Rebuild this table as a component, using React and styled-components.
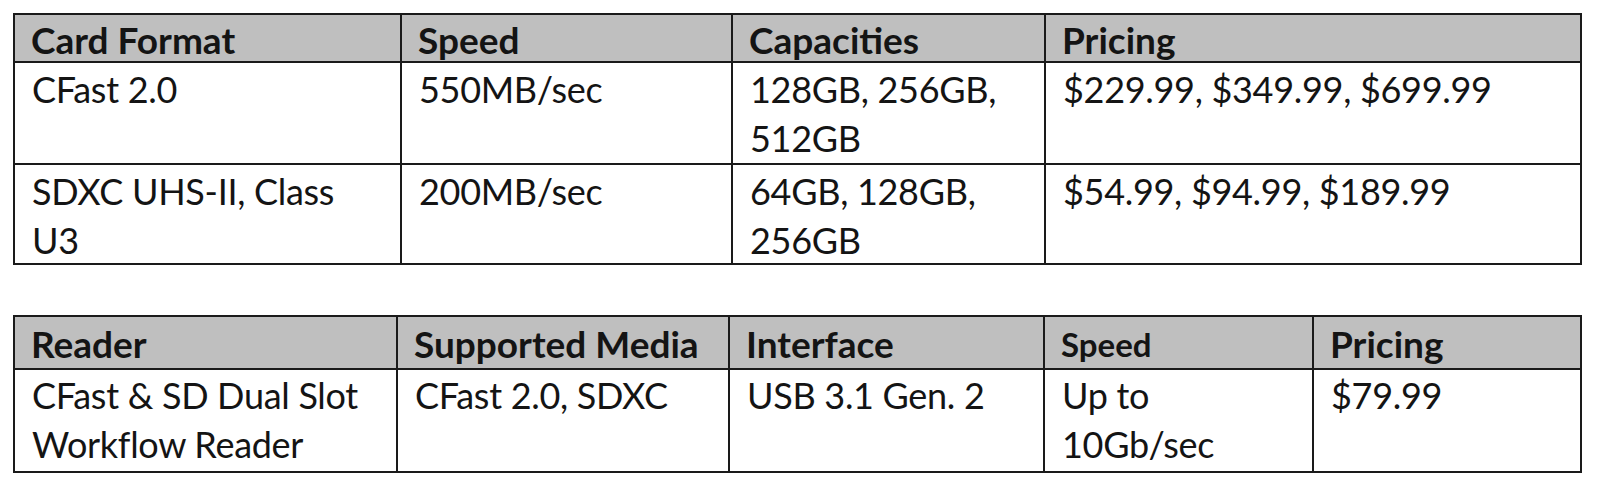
import React from 'react';
import styled, { createGlobalStyle } from 'styled-components';

const GlobalStyle = createGlobalStyle`
  html, body {
    margin: 0;
    padding: 0;
    background: #ffffff;
  }
  body {
    font-family: 'Lato', 'Open Sans', sans-serif;
    color: #141414;
  }
`;

const Page = styled.div`
  display: flex;
  flex-direction: column;
  gap: 50px;
  padding: 13px 0 0 13px;
  width: 1569px;
`;

const Table = styled.div`
  display: grid;
  grid-template-columns: ${p => p.cols};
  grid-template-rows: ${p => p.rows};
  gap: 2px;
  padding: 2px;
  background: #1a1a1a;
`;

const HeadCell = styled.div`
  background: #bfbfbf;
  font-weight: 700;
  font-size: ${p => (p.small ? '33px' : '37px')};
  line-height: 46px;
  padding: ${p => p.pad} 10px 0 16px;
  white-space: nowrap;
  overflow: hidden;
`;

const BodyCell = styled.div`
  background: #ffffff;
  font-size: 36px;
  letter-spacing: -0.3px;
  line-height: 49px;
  padding: ${p => p.pad} 10px 0 17px;
  white-space: nowrap;
  overflow: hidden;
`;

const cards = {
  cols: '385px 329px 311px 534px',
  rows: '46px 100px 98px',
  headPad: '2px',
  bodyPad: '2px',
  head: ['Card Format', 'Speed', 'Capacities', 'Pricing'],
  body: [
    [['CFast 2.0'], ['550MB/sec'], ['128GB, 256GB,', '512GB'], ['$229.99, $349.99, $699.99']],
    [['SDXC UHS-II, Class', 'U3'], ['200MB/sec'], ['64GB, 128GB,', '256GB'], ['$54.99, $94.99, $189.99']],
  ],
};

const readers = {
  cols: '381px 330px 313px 267px 266px',
  rows: '51px 101px',
  headPad: '4px',
  bodyPad: '1px',
  smallHead: 3,
  head: ['Reader', 'Supported Media', 'Interface', 'Speed', 'Pricing'],
  body: [
    [['CFast & SD Dual Slot', 'Workflow Reader'], ['CFast 2.0, SDXC'], ['USB 3.1 Gen. 2'], ['Up to', '10Gb/sec'], ['$79.99']],
  ],
};

function Lines({ lines }) {
  return lines.map((l, i) => (
    <React.Fragment key={i}>
      {i > 0 && <br />}
      {l}
    </React.Fragment>
  ));
}

function DataTable({ data }) {
  return (
    <Table cols={data.cols} rows={data.rows}>
      {data.head.map((h, i) => (
        <HeadCell key={h + i} pad={data.headPad} small={data.smallHead === i}>{h}</HeadCell>
      ))}
      {data.body.map((row, r) =>
        row.map((lines, c) => (
          <BodyCell key={r + '-' + c} pad={data.bodyPad}>
            <Lines lines={lines} />
          </BodyCell>
        ))
      )}
    </Table>
  );
}

export default function App() {
  return (
    <>
      <GlobalStyle />
      <Page>
        <DataTable data={cards} />
        <DataTable data={readers} />
      </Page>
    </>
  );
}
